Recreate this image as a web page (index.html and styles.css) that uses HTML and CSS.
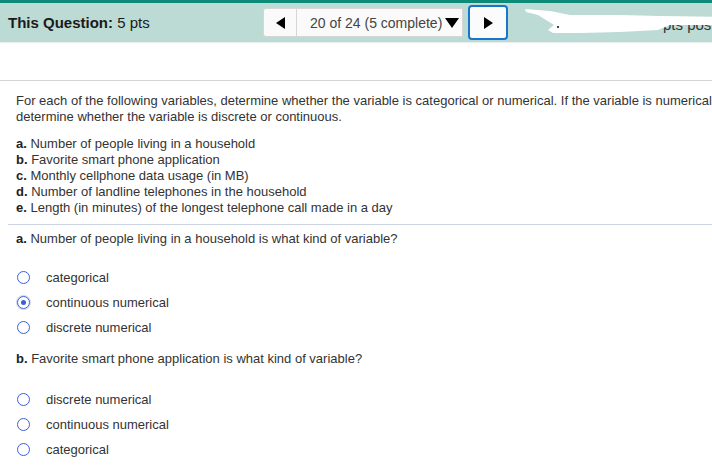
FILE: index.html
```html
<!DOCTYPE html>
<html lang="en">
<head>
  <meta charset="UTF-8">
  <title>This Question</title>
  <link rel="stylesheet" href="styles.css">
</head>
<body>
  <header class="qbar">
    <div class="qtitle"><b>This Question:</b> 5 pts</div>
    <div class="qnav">
      <button class="nav-btn prev"><span class="tri-left"></span></button>
      <div class="nav-select">20 of 24 (5 complete)<span class="tri-down"></span></div>
      <button class="nav-btn next"><span class="tri-right"></span></button>
    </div>
    <div class="qpoints">
      <span class="pts">pts pos</span>
      <svg class="smudge" width="204" height="36" viewBox="0 0 204 36">
        <path d="M5 6 L30 8 L50 12 L100 12 L140 13 L204 14 L204 22 L150 22 L138 27 L100 29 L60 30 L33 30 L28 27 L34 22 L26 17 L18 12 L6 9 Z" fill="#fff"/>
        <rect x="37" y="23" width="2" height="2" fill="#444"/>
      </svg>
    </div>
  </header>
  <div class="spacer"></div>
  <main class="question">
    <p class="intro">For each of the following variables, determine whether the variable is categorical or numerical. If the variable is numerical, determine whether the variable is discrete or continuous.</p>
    <ul class="vars">
      <li><b>a.</b> Number of people living in a household</li>
      <li><b>b.</b> Favorite smart phone application</li>
      <li><b>c.</b> Monthly cellphone data usage (in MB)</li>
      <li><b>d.</b> Number of landline telephones in the household</li>
      <li><b>e.</b> Length (in minutes) of the longest telephone call made in a day</li>
    </ul>
    <div class="part">
      <p class="ask"><b>a.</b> Number of people living in a household is what kind of variable?</p>
      <ul class="choices">
        <li><span class="radio"></span>categorical</li>
        <li><span class="radio on"></span>continuous numerical</li>
        <li><span class="radio"></span>discrete numerical</li>
      </ul>
      <p class="ask"><b>b.</b> Favorite smart phone application is what kind of variable?</p>
      <ul class="choices second">
        <li><span class="radio"></span>discrete numerical</li>
        <li><span class="radio"></span>continuous numerical</li>
        <li><span class="radio"></span>categorical</li>
      </ul>
    </div>
  </main>
</body>
</html>
```

FILE: styles.css
```css
body {
  margin: 0;
  font-family: "Liberation Sans", Arial, sans-serif;
  color: #222;
  background: #fff;
  overflow: hidden;
}
.qbar {
  display: flex;
  align-items: center;
  height: 39px;
  border-top: 3px solid #0d8a78;
  background-color: #bcdbd5;
}
.qtitle {
  flex: 0 0 263px;
  padding-left: 8px;
  box-sizing: border-box;
  font-size: 15px;
  color: #1a1a1a;
}
.qnav {
  display: flex;
  align-items: center;
}
.nav-btn {
  height: 29px;
  border: 1px solid #d6d6d6;
  background: #fafafa;
  padding: 0;
  display: flex;
  align-items: center;
  justify-content: center;
}
.prev {
  width: 34px;
  border-radius: 3px 0 0 3px;
}
.next {
  width: 40px;
  height: 35px;
  margin-left: 5px;
  border: 2px solid #1b74c9;
  border-radius: 4px;
  background: #fbfbfb;
}
.tri-left, .tri-right, .tri-down {
  width: 0;
  height: 0;
  display: inline-block;
}
.tri-left {
  border-top: 6px solid transparent;
  border-bottom: 6px solid transparent;
  border-right: 9px solid #000;
}
.tri-right {
  border-top: 6px solid transparent;
  border-bottom: 6px solid transparent;
  border-left: 9px solid #000;
}
.tri-down {
  margin-left: 3px;
  border-left: 7px solid transparent;
  border-right: 7px solid transparent;
  border-top: 10px solid #000;
}
.nav-select {
  height: 29px;
  width: 166px;
  box-sizing: border-box;
  border: 1px solid #d6d6d6;
  border-left: none;
  background: #fafafa;
  display: flex;
  align-items: center;
  padding-left: 13px;
  font-size: 14px;
  color: #444;
  white-space: nowrap;
}
.qpoints {
  flex: 1;
  position: relative;
  height: 39px;
}
.pts {
  position: absolute;
  left: 155px;
  top: 13px;
  font-size: 15px;
  color: #333;
  white-space: nowrap;
}
.smudge {
  position: absolute;
  left: 12px;
  top: 0;
}
.spacer {
  height: 38px;
  border-bottom: 1px solid #d3d3d8;
  background: linear-gradient(#e4ecea 0, #fff 2px);
}
.question {
  width: 730px;
  padding: 12px 0 0 16px;
  font-size: 13px;
  line-height: 16px;
  color: #333;
}
.question b {
  color: #222;
}
.intro {
  margin: 0;
}
.vars {
  list-style: none;
  margin: 11px 0 0;
  padding: 0;
}
.part {
  margin: 8px 0 0 -8px;
  padding: 6px 0 0 8px;
  border-top: 1px solid #ccd4e2;
}
.ask {
  margin: 0;
}
.choices {
  list-style: none;
  margin: 18px 0 11px;
  padding: 0;
}
.choices.second {
  margin-top: 20px;
}
.choices li {
  display: flex;
  align-items: center;
  height: 25px;
}
.radio {
  width: 13px;
  height: 13px;
  border: 1.5px solid #3d5fd6;
  border-radius: 50%;
  box-sizing: border-box;
  margin: 0 16px 0 1px;
  position: relative;
  flex: none;
}
.radio.on::after {
  content: "";
  position: absolute;
  left: 2.5px;
  top: 2.5px;
  width: 5px;
  height: 5px;
  border-radius: 50%;
  background: #3d5fd6;
}
.radio.on {
  box-shadow: 0 0 0 1px rgba(61, 95, 214, 0.25);
}
```
